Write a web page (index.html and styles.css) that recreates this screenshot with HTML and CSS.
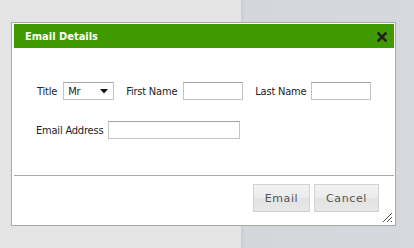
FILE: index.html
```html
<!DOCTYPE html>
<html>
<head>
<meta charset="utf-8">
<link rel="stylesheet" href="styles.css">
</head>
<body>
<div class="page">
  <div class="panel-left"></div>
  <div class="panel-right"></div>
</div>
<div class="dialog">
  <div class="dialog-header">
    <span class="dialog-title">Email Details</span>
    <svg class="close" width="10" height="10" viewBox="0 0 10 10"><path d="M1.5 1.5 L8.5 8.5 M8.5 1.5 L1.5 8.5" stroke="#222" stroke-width="2.6" stroke-linecap="square"/></svg>
  </div>
  <div class="dialog-body">
    <div class="form-row">
      <label class="field"><span class="label">Title</span>
        <span class="select"><span>Mr</span><svg width="8" height="5" viewBox="0 0 8 5"><path d="M0 0 H8 L4 4.5 Z" fill="#111"/></svg></span>
      </label>
      <label class="field"><span class="label">First Name</span><span class="input short"></span></label>
      <label class="field field-last"><span class="label">Last Name</span><span class="input short"></span></label>
    </div>
    <div class="form-row">
      <label class="field field-email"><span class="label">Email Address</span><span class="input long"></span></label>
    </div>
  </div>
  <div class="dialog-footer">
    <button class="btn btn-email">Email</button>
    <button class="btn btn-cancel">Cancel</button>
    <svg class="grip" width="12" height="12" viewBox="0 0 12 12"><path d="M11 2 L2 11 M11 6 L6 11 M11 10 L10 11" stroke="#555" stroke-width="1"/></svg>
  </div>
</div>
</body>
</html>
```
FILE: styles.css
```css
html, body { margin: 0; padding: 0; width: 414px; height: 248px; overflow: hidden; }
body { font-family: "DejaVu Sans Condensed", "DejaVu Sans", sans-serif; position: relative; }
.page { display: flex; height: 248px; }
.panel-left { width: 241px; background: #e4e4e4; }
.panel-right { flex: 1; background: linear-gradient(to right, #c9cdd2 0, #d3d7db 4px, #d5d8dc 100%); }

.dialog {
  position: absolute; left: 11px; top: 22px;
  width: 380px; height: 200px;
  border: 1px solid #a9a9a9;
  background: #fff;
  padding: 1px 1px 1px 2px;
  display: flex; flex-direction: column;
}
.dialog-header {
  height: 24px; background: #3f9a00;
  display: flex; align-items: center; justify-content: space-between;
  padding: 0 7px 0 11px;
}
.dialog-title { color: #fff; font-weight: bold; font-size: 11px; font-family: "DejaVu Sans Condensed", "DejaVu Sans", sans-serif; }
.close { display: block; margin-top: 1px; }

.dialog-body {
  flex: 1; border-bottom: 1px solid #aaaaaa;
  padding: 34px 0 0 23px;
  display: flex; flex-direction: column; gap: 21px;
}
.form-row { display: flex; align-items: center; gap: 12px; height: 18px; }
.field { display: flex; align-items: center; gap: 6px; font-size: 11px; color: #222; letter-spacing: -0.2px; }
.field-last { gap: 5px; }
.field-email { margin-left: -1px; gap: 5px; }
.select {
  height: 16px; border: 1px solid #c4c4c4; border-top-color: #a9a9a9;
  display: flex; align-items: center; justify-content: space-between;
  padding: 0 3px 0 4px; box-sizing: content-box; width: 42px;
  font-size: 11px;
}
.select svg { display: block; margin-right: 2px; }
.input { display: block; height: 16px; border: 1px solid #c4c4c4; border-top-color: #a0a0a0; background: #fff; }
.input.short { width: 58px; }
.input.long { width: 130px; }

.dialog-footer {
  height: 48px; position: relative;
  display: flex; justify-content: flex-end; align-items: flex-start;
  padding: 8px 15px 0 0; box-sizing: border-box; gap: 4px;
}
.btn {
  height: 28px; border: 1px solid #d2d2d2;
  background: linear-gradient(#f2f2f2, #ebebeb 50%, #e2e2e2 50%, #e8e8e8);
  color: #555; font-family: "DejaVu Sans", Verdana, sans-serif; font-size: 11px; letter-spacing: 0.6px;
  padding: 0; margin: 0;
}
.btn-email { width: 57px; }
.btn-cancel { width: 65px; }
.grip { position: absolute; right: 1px; bottom: 1px; }
```
